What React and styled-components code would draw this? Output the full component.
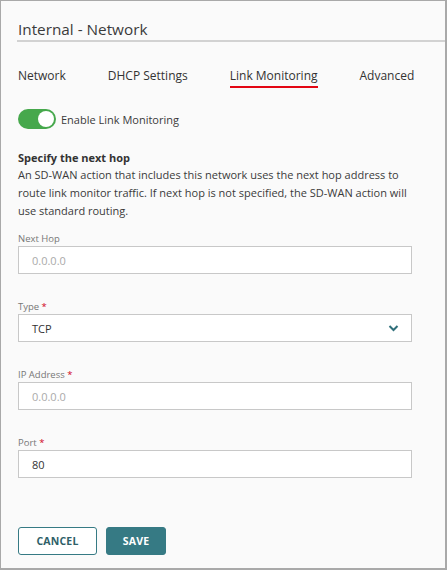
import * as React from "react";
import styled, { createGlobalStyle } from "styled-components";

const GlobalStyle = createGlobalStyle`
  html, body {
    margin: 0;
    padding: 0;
    background: #ffffff;
  }
  body {
    font-family: "Open Sans", "Liberation Sans", sans-serif;
    color: #333;
  }
`;

const Frame = styled.div`
  box-sizing: border-box;
  width: 447px;
  height: 570px;
  border: 1px solid #a9a9a9;
  border-width: 1px 2px 2px 1px;
  background: #fafafa;
  padding: 0 0 0 16px;
  display: flex;
  flex-direction: column;
`;

const Title = styled.h1`
  margin: 0;
  padding: 18px 0 0 1px;
  font-size: 15.3px;
  font-weight: 400;
  color: #3a3a3a;
  border-bottom: 2px solid #d2d2d2;
  line-height: 21px;
`;

const TabBar = styled.div`
  display: flex;
  gap: 42px;
  padding: 26px 0 0 1px;
`;

const Tab = styled.div`
  font-size: 12px;
  line-height: 16px;
  color: #333;
  padding-bottom: 2px;
  border-bottom: 2px solid ${p => (p.active ? "#e30613" : "transparent")};
`;

const Body = styled.div`
  padding: 0 33px 0 1px;
  display: flex;
  flex-direction: column;
`;

const ToggleRow = styled.div`
  display: flex;
  align-items: center;
  margin-top: 21px;
  gap: 5px;
`;

const Switch = styled.div`
  width: 38px;
  height: 20px;
  border-radius: 10px;
  background: #46a84c;
  position: relative;
  &::after {
    content: "";
    position: absolute;
    right: 2px;
    top: 2px;
    width: 16px;
    height: 16px;
    border-radius: 50%;
    background: #fff;
  }
`;

const ToggleLabel = styled.span`
  font-size: 11px;
  color: #3a3a3a;
`;

const SectionTitle = styled.div`
  margin-top: 20px;
  font-size: 11px;
  font-weight: 700;
  color: #333;
  line-height: 17px;
`;

const Description = styled.p`
  margin: 0;
  font-size: 11px;
  line-height: 18px;
  color: #3a3a3a;
`;

const Field = styled.div`
  margin-top: ${p => p.top}px;
  display: flex;
  flex-direction: column;
`;

const Label = styled.label`
  font-size: 9.5px;
  color: #777;
  line-height: 12px;
  margin-bottom: 1px;
`;

const Req = styled.span`
  color: #d0021b;
`;

const Box = styled.div`
  box-sizing: border-box;
  height: 28px;
  border: 1px solid #c8c8c8;
  background: #fff;
  display: flex;
  align-items: center;
  justify-content: space-between;
  padding: 0 12px 0 13px;
  font-size: 11px;
  color: ${p => (p.placeholder ? "#aaa" : "#333")};
`;

const Buttons = styled.div`
  display: flex;
  gap: 9px;
  margin-top: 49px;
`;

const Button = styled.button`
  box-sizing: border-box;
  width: ${p => p.w}px;
  height: 28px;
  padding: 0;
  border-radius: 3px;
  font-family: inherit;
  font-size: 10.5px;
  font-weight: 700;
  letter-spacing: 0.2px;
  border: 1px solid #367a84;
  background: ${p => (p.primary ? "#367a84" : "#fff")};
  color: ${p => (p.primary ? "#fff" : "#2f5f68")};
`;

const Chevron = () => (
  <svg width="11" height="8" viewBox="0 0 11 8">
    <path d="M1.5 2 L5.5 6 L9.5 2" fill="none" stroke="#2f6f7a" strokeWidth="2" />
  </svg>
);

export default function App() {
  return (
    <>
      <GlobalStyle />
      <Frame>
        <Title>Internal - Network</Title>
        <TabBar>
          <Tab>Network</Tab>
          <Tab>DHCP Settings</Tab>
          <Tab active>Link Monitoring</Tab>
          <Tab>Advanced</Tab>
        </TabBar>
        <Body>
          <ToggleRow>
            <Switch />
            <ToggleLabel>Enable Link Monitoring</ToggleLabel>
          </ToggleRow>
          <SectionTitle>Specify the next hop</SectionTitle>
          <Description>
            An SD-WAN action that includes this network uses the next hop address to
            route link monitor traffic. If next hop is not specified, the SD-WAN action will
            use standard routing.
          </Description>
          <Field top={13}>
            <Label>Next Hop</Label>
            <Box placeholder>0.0.0.0</Box>
          </Field>
          <Field top={27}>
            <Label>Type <Req>*</Req></Label>
            <Box>
              TCP
              <Chevron />
            </Box>
          </Field>
          <Field top={27}>
            <Label>IP Address <Req>*</Req></Label>
            <Box placeholder>0.0.0.0</Box>
          </Field>
          <Field top={27}>
            <Label>Port <Req>*</Req></Label>
            <Box>80</Box>
          </Field>
          <Buttons>
            <Button w={79}>CANCEL</Button>
            <Button primary w={60}>SAVE</Button>
          </Buttons>
        </Body>
      </Frame>
    </>
  );
}
